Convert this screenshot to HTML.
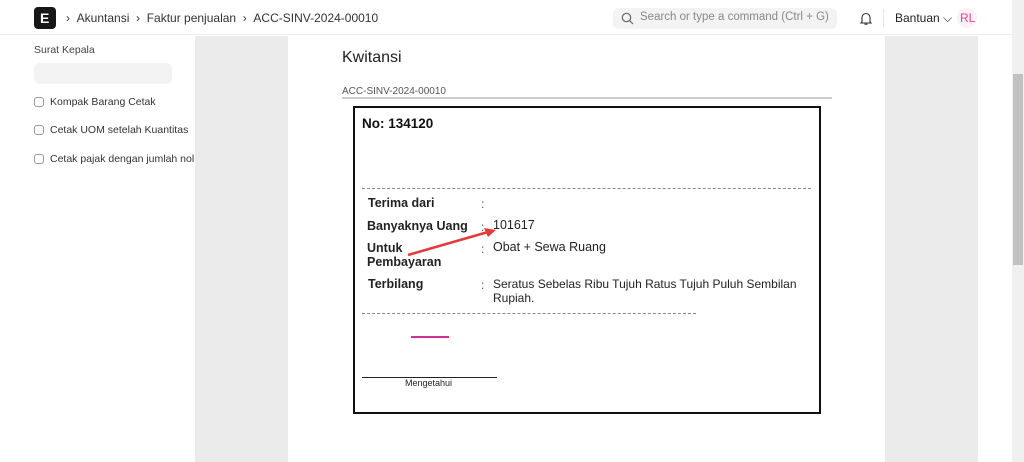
<!DOCTYPE html>
<html><head><meta charset="utf-8"><style>
*{margin:0;padding:0;box-sizing:border-box}
body{width:1024px;height:462px;overflow:hidden;background:#fff;font-family:"Liberation Sans",sans-serif;position:relative}
.a{position:absolute}
.t{white-space:nowrap}
</style></head><body>
<div class="a" style="left:0;top:0;width:1012px;height:35px;border-bottom:1px solid #ececec;background:#fff"></div>
<div class="a" style="left:34px;top:7px;width:22px;height:22px;background:#171717;border-radius:4px"></div>
<div class="a t" style="left:40px;top:10px;color:#fff;font-weight:bold;font-size:14px">E</div>
<div class="a t" style="left:66px;top:11px;font-size:12px;color:#333">›&nbsp;&nbsp;Akuntansi&nbsp;&nbsp;›&nbsp;&nbsp;Faktur penjualan&nbsp;&nbsp;›&nbsp;&nbsp;ACC-SINV-2024-00010</div>
<div class="a" style="left:613px;top:8px;width:224px;height:21px;background:#f3f3f3;border-radius:6px"></div>
<svg class="a" style="left:621px;top:12px" width="13" height="13" viewBox="0 0 13 13"><circle cx="5.5" cy="5.5" r="4.2" fill="none" stroke="#666" stroke-width="1.2"/><line x1="8.6" y1="8.6" x2="12" y2="12" stroke="#666" stroke-width="1.2"/></svg>
<div class="a t" style="left:640px;top:11px;font-size:11.5px;color:#888">Search or type a command (Ctrl + G)</div>
<svg class="a" style="left:859px;top:11px" width="14" height="15" viewBox="0 0 14 15"><path d="M3 11V6.5a4 4 0 0 1 8 0V11l1 1H2z M5.5 13.2h3" fill="none" stroke="#333" stroke-width="1.1"/></svg>
<div class="a" style="left:883px;top:9px;width:1px;height:18px;background:#e5e5e5"></div>
<div class="a t" style="left:895px;top:11px;font-size:12px;color:#222">Bantuan ⌵</div>
<div class="a" style="left:957px;top:8px;width:20px;height:20px;border-radius:50%;background:#fdf0f6"></div>
<div class="a t" style="left:960px;top:11px;font-size:12px;color:#e0439a">RL</div>
<div class="a t" style="left:34px;top:44px;font-size:10.5px;color:#444">Surat Kepala</div>
<div class="a" style="left:34px;top:63px;width:138px;height:21px;background:#f3f3f3;border-radius:6px"></div>
<div class="a" style="left:34px;top:97px;width:10px;height:10px;border:1px solid #999;border-radius:3px"></div>
<div class="a t" style="left:50px;top:96px;font-size:10.5px;color:#333">Kompak Barang Cetak</div>
<div class="a" style="left:34px;top:125px;width:10px;height:10px;border:1px solid #999;border-radius:3px"></div>
<div class="a t" style="left:50px;top:124px;font-size:10.5px;color:#333">Cetak UOM setelah Kuantitas</div>
<div class="a" style="left:34px;top:154px;width:10px;height:10px;border:1px solid #999;border-radius:3px"></div>
<div class="a t" style="left:50px;top:153px;font-size:10.5px;color:#333">Cetak pajak dengan jumlah nol</div>
<div class="a" style="left:195px;top:36px;width:93px;height:426px;background:#ebebeb"></div>
<div class="a" style="left:885px;top:36px;width:93px;height:426px;background:#ebebeb"></div>
<div class="a" style="left:1012px;top:0;width:12px;height:462px;background:#f0f0f0"></div>
<div class="a" style="left:1013px;top:74px;width:10px;height:191px;background:#c1c1c1"></div>
<div class="a t" style="left:342px;top:49px;font-size:16px;color:#222">Kwitansi</div>
<div class="a t" style="left:342px;top:86px;font-size:10px;color:#555">ACC-SINV-2024-00010</div>
<div class="a" style="left:342px;top:97px;width:490px;height:2px;background:#ccc"></div>
<div class="a" style="left:353px;top:106px;width:468px;height:308px;border:2px solid #111"></div>
<div class="a t" style="left:362px;top:116px;font-size:13.5px;font-weight:bold;color:#111">No: 134120</div>
<div class="a" style="left:362px;top:188px;width:449px;border-top:1px dashed #888"></div>
<div class="a t" style="left:368px;top:196px;font-size:12.5px;font-weight:bold;color:#222">Terima dari</div>
<div class="a t" style="left:481px;top:197px;font-size:12px;color:#555">:</div>
<div class="a t" style="left:367px;top:219px;font-size:12.5px;font-weight:bold;color:#222">Banyaknya Uang</div>
<div class="a t" style="left:481px;top:220px;font-size:12px;color:#555">:</div>
<div class="a t" style="left:493px;top:218px;font-size:12.5px;color:#222">101617</div>
<div class="a t" style="left:367px;top:241px;font-size:12.5px;font-weight:bold;color:#222;line-height:14px">Untuk<br>Pembayaran</div>
<div class="a t" style="left:481px;top:242px;font-size:12px;color:#555">:</div>
<div class="a t" style="left:493px;top:240px;font-size:12.5px;color:#222">Obat + Sewa Ruang</div>
<div class="a t" style="left:368px;top:277px;font-size:12.5px;font-weight:bold;color:#222">Terbilang</div>
<div class="a t" style="left:481px;top:278px;font-size:12px;color:#555">:</div>
<div class="a t" style="left:493px;top:277px;font-size:12px;color:#222;line-height:14px">Seratus Sebelas Ribu Tujuh Ratus Tujuh Puluh Sembilan<br>Rupiah.</div>
<div class="a" style="left:362px;top:313px;width:334px;border-top:1px dashed #888"></div>
<div class="a" style="left:411px;top:336px;width:38px;height:2px;background:#d0309a"></div>
<div class="a" style="left:362px;top:377px;width:135px;height:1px;background:#222"></div>
<div class="a t" style="left:405px;top:378px;font-size:9px;color:#222">Mengetahui</div>
<svg class="a" style="left:360px;top:220px" width="140" height="60"><line x1="48" y1="35" x2="128" y2="12" stroke="#e53a3a" stroke-width="2.5"/><polygon points="136,10 124,8 128,17" fill="#e53a3a"/></svg>
</body></html>
